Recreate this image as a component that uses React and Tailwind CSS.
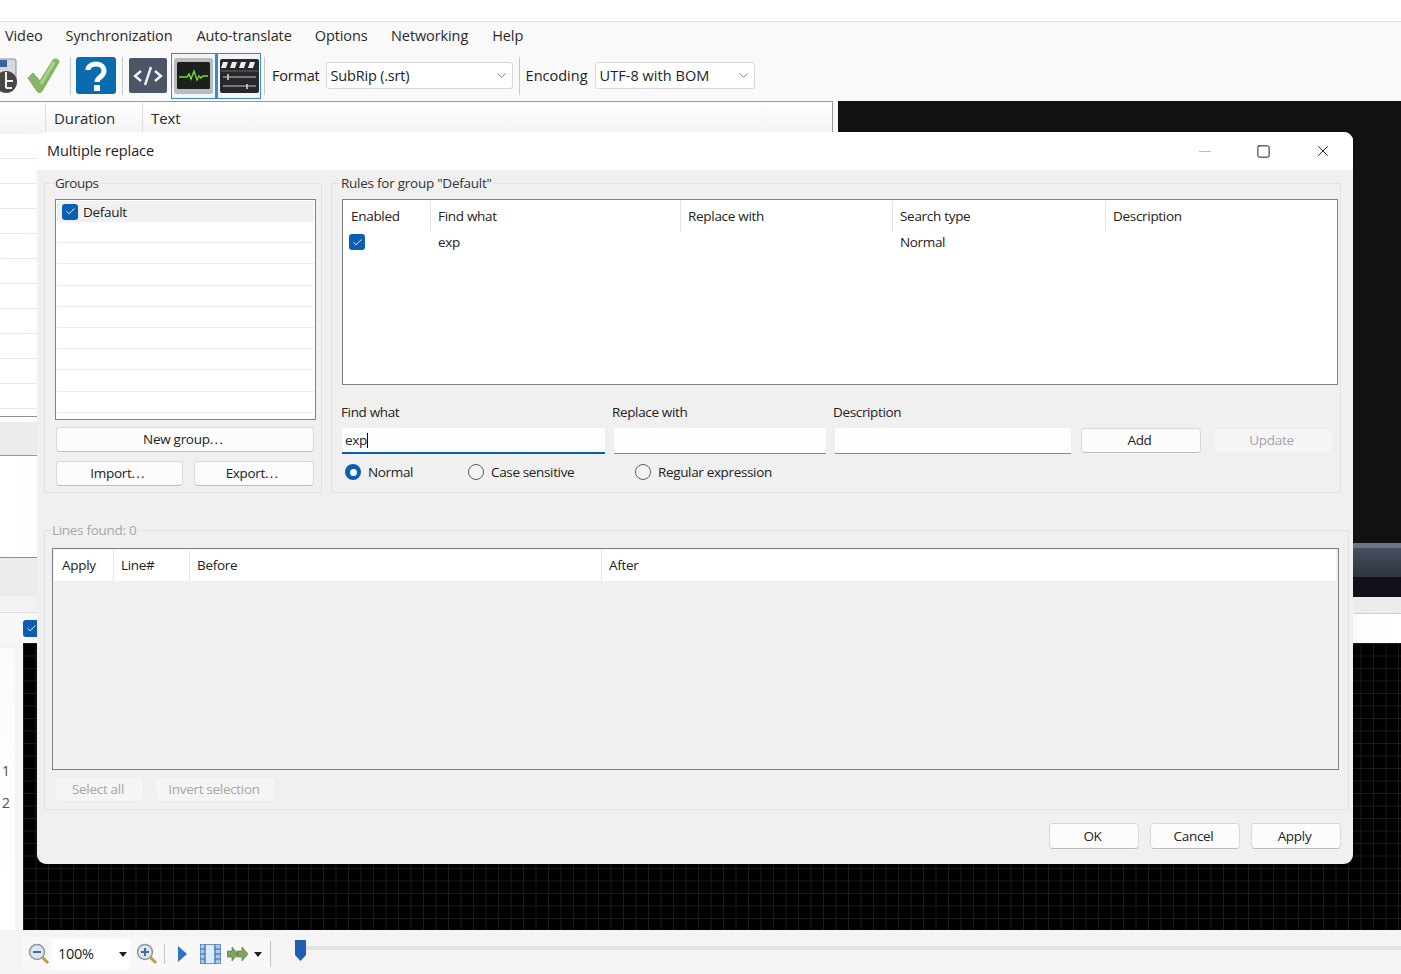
import React from "react";
import { X, Square, ChevronDown, Check } from "lucide-react";

const FONT = { fontFamily: '"Open Sans", "Noto Sans", sans-serif' };

function Btn({ children, className = "", disabled = false }) {
  return (
    <div
      className={
        "flex items-center justify-center rounded-[4px] border pr-[3px] text-[13.5px] tracking-[-0.3px] " +
        (disabled
          ? "border-[#ededed] bg-[#f5f5f5] text-[#a6a6a6] "
          : "border-[#d9d9d9] border-b-[#bdbdbd] bg-[#fcfcfc] text-[#222] ") +
        className
      }
    >
      {children}
    </div>
  );
}

function Dots() {
  return <span className="tracking-[1.2px]">...</span>;
}

function Box() {
  return (
    <div className="flex h-[16px] w-[16px] shrink-0 items-center justify-center rounded-[3px] bg-[#0a5fb4]">
      <Check size={11} strokeWidth={2} className="text-white" />
    </div>
  );
}

function Radio({ on, label, className = "" }) {
  return (
    <div className={"flex items-center gap-[7px] " + className}>
      {on ? (
        <div className="flex h-[16px] w-[16px] items-center justify-center rounded-full bg-[#0a5fb4]">
          <div className="h-[7px] w-[7px] rounded-full bg-white" />
        </div>
      ) : (
        <div className="h-[16px] w-[16px] rounded-full border border-[#5f5f5f] bg-[#f3f3f3]" />
      )}
      <span className="text-[13.5px] tracking-[-0.35px] text-[#222]">{label}</span>
    </div>
  );
}

function HeadCell({ w, children, sep = true }) {
  return (
    <div
      className={"flex h-full shrink-0 items-center pl-[7px] text-[13.5px] tracking-[-0.3px] text-[#222] " + (sep ? "border-r border-[#e5e5e5]" : "")}
      style={{ width: w }}
    >
      {children}
    </div>
  );
}

function Field({ label, className, labelClass, input, active }) {
  return (
    <div className={"flex flex-col " + className}>
      <div className={"h-[23px] text-[13.5px] leading-[18px] tracking-[-0.35px] text-[#222] " + labelClass}>{label}</div>
      <div
        className={
          "mt-[2px] flex h-[26px] items-center rounded-t-[3px] bg-[#fdfdfd] pl-[3px] text-[13.5px] tracking-[-0.3px] text-[#222] " +
          (active ? "border-b-2 border-[#0a5fb4]" : "border-b border-[#8a8a8a]")
        }
      >
        {input}
        {active && <span className="h-[15px] w-px bg-black" />}
      </div>
    </div>
  );
}

function AppMenu() {
  const items = [
    ["Video", "ml-[5px]"],
    ["Synchronization", "ml-[23px]"],
    ["Auto-translate", "ml-[24px]"],
    ["Options", "ml-[23px]"],
    ["Networking", "ml-[23.5px]"],
    ["Help", "ml-[24px]"],
  ];
  return (
    <div className="flex h-[28px] items-center bg-[#f9f9f9] text-[14.5px] tracking-[-0.1px] text-[#2a2a2a]">
      {items.map(([t, c]) => (
        <span key={t} className={c}>{t}</span>
      ))}
    </div>
  );
}

function Sep({ className = "" }) {
  return <div className={"h-[38px] w-px shrink-0 bg-[#c9c9c9] " + className} />;
}

function Select({ label, className, textClass = "" }) {
  return (
    <div className={"flex h-[27px] items-center justify-between rounded-[3px] border border-[#d8d8d8] bg-white pl-[4px] pr-[3px] text-[14.5px] tracking-[-0.2px] text-[#222] " + className}>
      <span className={textClass}>{label}</span>
      <ChevronDown size={15} strokeWidth={1.2} className="text-[#555]" />
    </div>
  );
}

function Toolbar() {
  return (
    <div className="flex h-[51px] items-center bg-[#f9f9f9]">
      <svg className="w-[18px] shrink-0" height="36" viewBox="0 0 18 36">
        <rect x="-6" y="1" width="22" height="26" rx="2" fill="#d5d8dc" stroke="#8b8f94" />
        <rect x="0" y="2" width="7" height="7" fill="#3c5f9e" />
        <circle cx="6" cy="24" r="11" fill="#464646" />
        <path d="M6 14v16M6 23h7M6 30h6" stroke="#f0f0f0" strokeWidth="2" fill="none" />
      </svg>
      <svg className="ml-[9px] shrink-0" width="33" height="36" viewBox="0 0 33 36">
        <path d="M1 20l5-5 7 8L26 2c2-2 6-1 6 2L15 33c-1 2-4 2-5 0z" fill="#85b866" stroke="#79ab5a" />
        <path d="M27 4L14 26" stroke="#a9d28f" strokeWidth="3" fill="none" />
      </svg>
      <Sep className="ml-[10px]" />
      <div className="ml-[5px] flex h-[37px] w-[40px] shrink-0 items-center justify-center rounded-[3px] bg-[#0a6bb0]">
        <svg width="24" height="32" viewBox="0 0 24 32">
          <path d="M4 10c0-4 4-6 8-6s8 2 8 7c0 6-7 6-7 11" fill="none" stroke="#fff" strokeWidth="5" />
          <rect x="10" y="25" width="6" height="6" fill="#fff" />
        </svg>
      </div>
      <Sep className="ml-[6px]" />
      <div className="ml-[6px] flex h-[35px] w-[38px] shrink-0 items-center justify-center rounded-[2px] bg-[#4a5566]">
        <svg width="32" height="24" viewBox="0 0 32 24">
          <path d="M9 7l-6 5 6 5M23 7l6 5-6 5M19 3l-6 18" fill="none" stroke="#f2f2f2" strokeWidth="2.4" />
        </svg>
      </div>
      <div className="ml-[4px] flex h-[46px] w-[45px] shrink-0 items-center justify-center border border-[#3d8ac4] bg-[#f2f6f9]">
        <div className="flex h-[36px] w-[39px] items-center justify-center rounded-[3px] bg-[#b8bcbf]">
          <svg width="33" height="27" viewBox="0 0 33 27">
            <rect width="33" height="27" rx="1.5" fill="#1c1f1c" />
            <path d="M2 15h8l2-3 2 5 3-8 3 9 2-4 2 2 2-2h5" fill="none" stroke="#6fdc35" strokeWidth="1.4" />
          </svg>
        </div>
      </div>
      <div className="flex h-[46px] w-[45px] shrink-0 items-center justify-center border border-l-2 border-[#3d8ac4] bg-[#f2f6f9]">
        <svg width="39" height="34" viewBox="0 0 39 34">
          <rect width="39" height="34" rx="2" fill="#26282b" />
          <path d="M3 3h5l-2 6H1zM12 3h5l-2 6h-5zM21 3h5l-2 6h-5zM30 3h5l-2 6h-5z" fill="#eee" />
          <path d="M1 12h37" stroke="#666" />
          <path d="M3 18h33M3 27h33" stroke="#c8c8c8" strokeWidth="1" />
          <path d="M8 15v6M27 25v5" stroke="#ddd" strokeWidth="1.5" />
        </svg>
      </div>
      <Sep className="ml-[3px]" />
      <span className="ml-[7px] text-[14.5px] tracking-[-0.2px] text-[#222]">Format</span>
      <Select label="SubRip (.srt)" className="ml-[6px] w-[187px]" />
      <Sep className="ml-[6px]" />
      <span className="ml-[6px] text-[14.5px] text-[#222]">Encoding</span>
      <Select label="UTF-8 with BOM" className="ml-[7px] w-[160px]" textClass="tracking-[0.05px]" />
    </div>
  );
}

function LeftStrip() {
  const rows = Array.from({ length: 11 });
  return (
    <div className="relative h-[542px] w-[838px] shrink-0 bg-[#f8f8f8] pr-[5px]">
      <div className="h-[315px] overflow-hidden border-r border-t border-[#9a9a9a] bg-gradient-to-r from-white to-[#efefef]">
        <div className="flex h-[32px] items-center bg-gradient-to-b from-white to-[#f3f3f3] pt-px text-[15px] tracking-[-0.1px] text-[#2a2a2a]">
          <div className="h-full w-[46px] border-r border-[#dcdcdc]" />
          <div className="flex h-full w-[97px] items-center border-r border-[#dcdcdc] pl-[8px]">Duration</div>
          <div className="pl-[8px]">Text</div>
        </div>
        {rows.map((_, i) => (
          <div key={i} className="h-[25px] border-b border-[#e9e9e9]" />
        ))}
      </div>
      <div className="h-[6px] border-t border-[#8f8f8f] bg-white" />
      <div className="h-[34px] border-b border-[#9a9a9a] bg-gradient-to-r from-[#ececec] to-[#d8d8d8]" />
      <div className="h-[102px] border-b border-[#8f8f8f] bg-gradient-to-r from-white to-[#e0e0e0]" />
      <div className="h-[38px] border-b border-[#e8e8e8] bg-gradient-to-r from-[#ececec] to-[#d5d5d5]" />
      <div className="h-[17px] border-b border-[#dedede] bg-[#f2f2f2]" />
    </div>
  );
}

function RightTop() {
  return (
    <div className="flex h-[542px] flex-1 flex-col bg-[#111]">
      <div className="h-[442px]" />
      <div className="h-[5px] bg-[#6e7480]" />
      <div className="h-[29px] bg-gradient-to-b from-[#4a5060] to-[#2e3340]" />
      <div className="h-[20px] bg-[#0f1018]" />
      <div className="h-[17px] border-b border-[#d0d0d0] bg-[#ececec]" />
      <div className="h-[29px] bg-gradient-to-r from-[#d8d8d8] to-white" />
    </div>
  );
}

function Bottom() {
  return (
    <div className="ml-[23px] flex h-[44px] items-center pt-[4px]">
      <div className="flex h-[34px] w-[247px] items-center bg-[#f8f8f8]">
        <svg className="ml-[5px]" width="22" height="22" viewBox="0 0 22 22">
          <circle cx="9" cy="9" r="7.5" fill="#dce6f0" stroke="#8c97a5" strokeWidth="1.5" />
          <path d="M5 9h8" stroke="#44699a" strokeWidth="2" />
          <path d="M14 14l6 6" stroke="#c49a3a" strokeWidth="3" />
        </svg>
        <div className="ml-[2px] flex h-[30px] w-[78px] items-center bg-white pl-[6px] text-[14.5px] tracking-[-0.3px] text-[#222]">
          100%
          <svg className="ml-auto mr-[3px]" width="8" height="5" viewBox="0 0 8 5"><path d="M0 0h8L4 5z" fill="#222" /></svg>
        </div>
        <svg className="ml-[6px]" width="22" height="22" viewBox="0 0 22 22">
          <circle cx="9" cy="9" r="7.5" fill="#dce6f0" stroke="#8c97a5" strokeWidth="1.5" />
          <path d="M5 9h8M9 5v8" stroke="#44699a" strokeWidth="2" />
          <path d="M14 14l6 6" stroke="#c49a3a" strokeWidth="3" />
        </svg>
        <div className="ml-[6px] h-[20px] w-px bg-[#c4c4c4]" />
        <svg className="ml-[12px]" width="10" height="16" viewBox="0 0 10 16"><path d="M1 0l9 8-9 8z" fill="#2f74c8" /></svg>
        <svg className="ml-[13px]" width="21" height="20" viewBox="0 0 21 20">
          <rect width="21" height="20" fill="#a9c8ee" stroke="#3a63a0" />
          <path d="M5 0v20M15 0v20" stroke="#3a63a0" />
          <rect x="6" y="1" width="8" height="18" fill="#dceafa" />
          <path d="M0 5h5M0 10h5M0 15h5M15 5h6M15 10h6M15 15h6" stroke="#3a63a0" />
        </svg>
        <svg className="ml-[6px]" width="21" height="14" viewBox="0 0 21 14">
          <path d="M0 4h5V0l6 7-6 7v-4H0zM10 4h5V0l6 7-6 7v-4h-5z" fill="#7da65c" stroke="#4b7a35" strokeWidth="0.6" />
        </svg>
        <svg className="ml-[6px]" width="8" height="5" viewBox="0 0 8 5"><path d="M0 0h8L4 5z" fill="#222" /></svg>
      </div>
      <div className="h-[26px] w-px bg-[#c4c4c4]" />
      <div className="relative mb-[12px] ml-[23px] h-[4px] flex-1 rounded-l bg-[#e4e4e4]">
        <svg className="absolute left-0 top-[-6px]" width="13" height="21" viewBox="0 0 13 21">
          <path d="M1 0h11v15l-5.5 6L1 15z" fill="#1e5fb0" />
        </svg>
      </div>
    </div>
  );
}

function Dialog() {
  const lines = Array.from({ length: 9 });
  return (
    <div className="absolute left-[37px] top-[132px] flex h-[732px] w-[1316px] flex-col overflow-hidden rounded-[9px] bg-[#f0f0f0] text-[#222]">
      <div className="flex h-[38px] shrink-0 items-center bg-white pl-[10px] text-[14.5px] tracking-[-0.1px] text-[#222]">
        <span>Multiple replace</span>
        <div className="ml-auto flex items-center">
          <div className="h-px w-[12px] bg-[#bdbdbd]" />
          <Square size={15} strokeWidth={1.5} className="ml-[45px] text-[#111]" />
          <X size={18} strokeWidth={1.2} className="ml-[43px] mr-[21px] text-[#111]" />
        </div>
      </div>
      <div className="flex flex-col px-[7px]">
        <div className="mt-[3px] flex h-[320px] gap-[9px]">
          <fieldset className="h-full w-[278px] border border-[#e3e3e3] pl-[10px]">
            <legend className="ml-[-1px] h-[20px] px-[1px] text-[13.5px] leading-[20px] tracking-[-0.5px] text-[#333]">Groups</legend>
            <div className="mt-[6px] h-[221px] w-[261px] border border-[#808080] bg-white p-px">
              <div className="flex h-[21px] items-center bg-[#f0f0f0] pl-[5px]">
                <Box />
                <span className="ml-[5px] mt-px text-[13.5px] tracking-[-0.3px]">Default</span>
              </div>
              {lines.map((_, i) => (
                <div key={i} className="h-[21.2px] border-b border-[#ececec]" />
              ))}
            </div>
            <Btn className="ml-px mt-[7px] h-[25px] w-[258px]">New group<Dots /></Btn>
            <div className="ml-px mt-[9px] flex gap-[11px]">
              <Btn className="h-[25px] w-[127px]">Import<Dots /></Btn>
              <Btn className="h-[25px] w-[120px]">Export<Dots /></Btn>
            </div>
          </fieldset>
          <fieldset className="h-full w-[1010px] border border-[#e3e3e3] pl-[10px]">
            <legend className="ml-[-2px] h-[20px] px-[1px] text-[13.5px] leading-[20px] tracking-[-0.25px] text-[#333]">Rules for group "Default"</legend>
            <div className="mt-[6px] h-[186px] w-[996px] border border-[#808080] bg-white p-px">
              <div className="flex h-[31px] items-center">
                <HeadCell w="87px">Enabled</HeadCell>
                <HeadCell w="250px">Find what</HeadCell>
                <HeadCell w="212px">Replace with</HeadCell>
                <HeadCell w="213px">Search type</HeadCell>
                <HeadCell w="225px" sep={false}>Description</HeadCell>
              </div>
              <div className="flex h-[20px] items-center text-[13.5px] tracking-[-0.35px]">
                <div className="w-[94px] pl-[5px]"><Box /></div>
                <div className="w-[462px]">exp</div>
                <div>Normal</div>
              </div>
            </div>
            <div className="mt-[18px] flex items-start">
              <Field label="Find what" labelClass="ml-[-1px]" className="w-[263px]" input="exp" active />
              <Field label="Replace with" labelClass="ml-[-2px]" className="ml-[9px] w-[212px]" />
              <Field label="Description" labelClass="ml-[-2px]" className="ml-[9px] w-[236px]" />
              <Btn className="ml-[10px] mt-[25px] h-[25px] w-[120px]">Add</Btn>
              <Btn disabled className="ml-[12px] mt-[25px] h-[25px] w-[120px]">Update</Btn>
            </div>
            <div className="mt-[9px] flex h-[18px] items-center pl-[3px]">
              <Radio on label="Normal" className="w-[123px]" />
              <Radio label="Case sensitive" className="w-[167px]" />
              <Radio label="Regular expression" />
            </div>
          </fieldset>
        </div>
        <fieldset className="mt-[27px] h-[290px] w-[1305px] border border-[#e3e3e3] pl-[7px]">
          <legend className="ml-[-1px] h-[20px] px-[1px] text-[13.5px] leading-[20px] tracking-[-0.3px] text-[#a6a6a6]">Lines found: 0</legend>
          <div className="mt-[8px] h-[222px] w-[1287px] border border-[#808080] bg-[#f0f0f0] p-px">
            <div className="flex h-[31px] w-[1282px] items-center bg-white">
              <HeadCell w="60px">
                <span className="pl-px">Apply</span>
              </HeadCell>
              <HeadCell w="76px">Line#</HeadCell>
              <HeadCell w="412px">Before</HeadCell>
              <HeadCell w="700px" sep={false}>After</HeadCell>
            </div>
          </div>
          <div className="ml-[3px] mt-[7px] flex gap-[11px]">
            <Btn disabled className="h-[25px] w-[89px]">Select all</Btn>
            <Btn disabled className="h-[25px] w-[121px]">Invert selection</Btn>
          </div>
        </fieldset>
        <div className="mt-[13px] flex justify-end gap-[11px] pr-[5px]">
          <Btn className="h-[26px] w-[90px]">OK</Btn>
          <Btn className="h-[26px] w-[90px]">Cancel</Btn>
          <Btn className="h-[26px] w-[90px]">Apply</Btn>
        </div>
      </div>
    </div>
  );
}

export default function App() {
  return (
    <div className="relative h-[974px] w-[1401px] overflow-hidden bg-[#f4f4f4]" style={FONT}>
      <div className="h-[22px] border-b border-[#e2e2e2] bg-white" />
      <AppMenu />
      <Toolbar />
      <div className="flex h-[542px]">
        <LeftStrip />
        <RightTop />
      </div>
      <div className="flex h-[287px]">
        <div className="w-[23px] shrink-0 bg-[#f4f4f4]">
          <div className="mt-[5px] h-[282px] w-[15px] bg-gradient-to-b from-[#fbfbfb] to-white pt-[107px] text-[14.5px] leading-[32px] text-[#555]">
            <div className="w-[10px] text-right">1</div>
            <div className="w-[10px] text-right">2</div>
          </div>
        </div>
        <div className="flex-1 bg-black bg-[linear-gradient(#1c1c1c_1px,transparent_1px),linear-gradient(90deg,#1c1c1c_1px,transparent_1px)] bg-[size:12.5px_12.5px]" />
      </div>
      <Bottom />
      <div className="absolute left-[23px] top-[620px] flex h-[17px] w-[17px] items-center justify-center rounded-[3px] bg-[#0a5fb4]">
        <Check size={11} strokeWidth={2} className="text-white" />
      </div>
      <Dialog />
    </div>
  );
}
